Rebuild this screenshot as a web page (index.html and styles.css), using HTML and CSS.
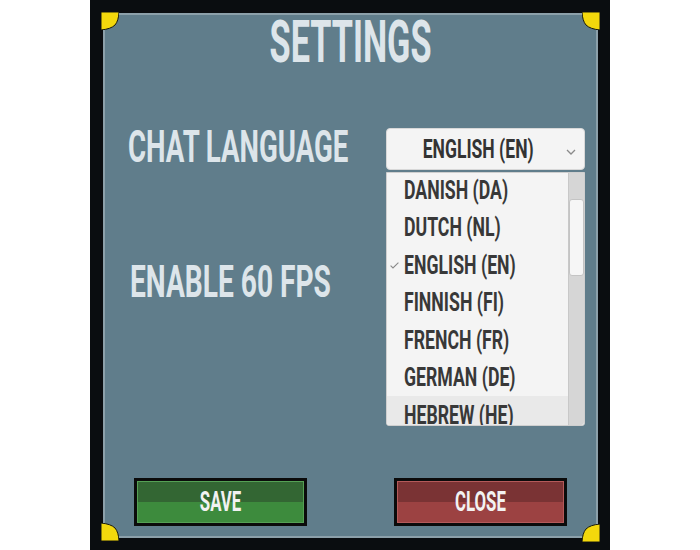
FILE: index.html
```html
<!DOCTYPE html>
<html>
<head>
<meta charset="utf-8">
<link rel="stylesheet" href="styles.css">
</head>
<body>
<div class="frame">
  <div class="panel">
    <h1 class="title"><span class="cond">SETTINGS</span></h1>
    <div class="row row-lang">
      <div class="label"><span class="cond c-label">CHAT LANGUAGE</span></div>
      <div class="select-wrap">
        <div class="select">
          <span class="select-text"><span class="cond c-sel">ENGLISH (EN)</span></span>
          <svg class="chev" width="10" height="6" viewBox="0 0 10 6"><path d="M1 1 L5 5 L9 1" fill="none" stroke="#8a8a8a" stroke-width="1.3"/></svg>
        </div>
        <div class="menu">
          <div class="items">
            <div class="item"><span class="cond c-item">DANISH (DA)</span></div>
            <div class="item"><span class="cond c-item">DUTCH (NL)</span></div>
            <div class="item"><svg class="check" width="9" height="7" viewBox="0 0 9 7"><path d="M0.6 3.6 L3 6 L8.4 0.6" fill="none" stroke="#8a8a8a" stroke-width="1.1"/></svg><span class="cond c-item">ENGLISH (EN)</span></div>
            <div class="item"><span class="cond c-item">FINNISH (FI)</span></div>
            <div class="item"><span class="cond c-item">FRENCH (FR)</span></div>
            <div class="item"><span class="cond c-item">GERMAN (DE)</span></div>
            <div class="item hover"><span class="cond c-item">HEBREW (HE)</span></div>
          </div>
          <div class="scrollbar"><div class="thumb"></div></div>
        </div>
      </div>
    </div>
    <div class="row row-fps">
      <div class="label"><span class="cond c-label2">ENABLE 60 FPS</span></div>
    </div>
    <div class="buttons">
      <button class="btn save"><span class="cond c-btn">SAVE</span></button>
      <button class="btn close"><span class="cond c-btn">CLOSE</span></button>
    </div>
  </div>
  <svg class="corner tl" width="18" height="18" viewBox="0 0 18 18"><path d="M0 0 H18 Q17.5 9 14 13 Q10 17 0 18 Z" fill="#f3d80c" stroke="#1a1a0a" stroke-width="1"/></svg>
  <svg class="corner tr" width="18" height="18" viewBox="0 0 18 18"><path d="M0 0 H18 Q17.5 9 14 13 Q10 17 0 18 Z" fill="#f3d80c" stroke="#1a1a0a" stroke-width="1"/></svg>
  <svg class="corner bl" width="18" height="18" viewBox="0 0 18 18"><path d="M0 0 H18 Q17.5 9 14 13 Q10 17 0 18 Z" fill="#f3d80c" stroke="#1a1a0a" stroke-width="1"/></svg>
  <svg class="corner br" width="18" height="18" viewBox="0 0 18 18"><path d="M0 0 H18 Q17.5 9 14 13 Q10 17 0 18 Z" fill="#f3d80c" stroke="#1a1a0a" stroke-width="1"/></svg>
</div>
</body>
</html>
```
FILE: styles.css
```css
html, body {
  margin: 0;
  padding: 0;
  background: #ffffff;
}
body {
  font-family: Roboto, "Liberation Sans", sans-serif;
  font-weight: 700;
}
.frame {
  position: relative;
  width: 520px;
  height: 550px;
  margin-left: 90px;
  background: #0a0d10;
  box-sizing: border-box;
  padding: 13px 12px 12px 13px;
}
.panel {
  height: 100%;
  box-sizing: border-box;
  background: #607d8b;
  border: 2px solid #8ca0aa;
  display: flex;
  flex-direction: column;
  padding: 5px 0 10px 0;
}
.cond {
  display: inline-block;
  transform: scaleX(0.58);
  transform-origin: left center;
  white-space: nowrap;
}
.title {
  margin: 0;
  font-size: 59px;
  line-height: 44px;
  color: #dde5ea;
  font-weight: 700;
  text-align: center;
}
.title .cond {
  transform-origin: center center;
}
.row {
  display: grid;
  grid-template-columns: minmax(0, 1fr) 199px;
  padding: 0 11px 0 23px;
  align-items: start;
}
.row-lang {
  margin-top: 64px;
}
.row-fps {
  margin-top: 95px;
}
.label {
  font-size: 45px;
  line-height: 33px;
  color: #dde5ea;
  margin-top: 2px;
  min-width: 0;
}
.c-label {
  transform: scaleX(0.613);
}
.c-label2 {
  transform: scaleX(0.625);
}
.row-fps .label {
  margin-top: 0;
  padding-left: 2px;
}
.select-wrap {
  position: relative;
  height: 42px;
}
.select {
  height: 42px;
  box-sizing: border-box;
  background: #f4f4f4;
  border: 1px solid #d8d8d8;
  border-radius: 4px;
  display: flex;
  align-items: center;
  padding-right: 14px;
  position: relative;
}
.select-text {
  flex: 1;
  text-align: center;
  font-size: 26px;
  line-height: 20px;
  color: #333333;
}
.c-sel {
  transform: scaleX(0.675);
  transform-origin: center center;
}
.chev {
  position: absolute;
  right: 8px;
  top: 20px;
}
.menu {
  position: absolute;
  left: 0;
  top: 44px;
  width: 199px;
  height: 254px;
  box-sizing: border-box;
  background: #f4f4f4;
  border: 1px solid #cfcfcf;
  border-radius: 0 0 3px 3px;
  display: flex;
  overflow: hidden;
}
.items {
  flex: 1;
  min-width: 0;
  margin-top: -2px;
}
.item {
  height: 37.5px;
  display: flex;
  align-items: center;
  padding-left: 17px;
  font-size: 26px;
  color: #383838;
  position: relative;
}
.item.hover {
  background: #e9e9e9;
}
.c-item {
  transform: scaleX(0.68);
}
.check {
  position: absolute;
  left: 3px;
  top: 16px;
}
.scrollbar {
  width: 16px;
  flex: none;
  background: #d6d6d6;
  border-left: 1px solid #c8c8c8;
  box-sizing: border-box;
  padding-top: 26px;
  border-radius: 0 0 3px 0;
}
.thumb {
  height: 77px;
  background: #f6f6f6;
  border: 1px solid #c4c4c4;
  border-radius: 3px;
  box-sizing: border-box;
}
.buttons {
  margin-top: auto;
  display: flex;
  justify-content: space-between;
  padding: 0 29px;
}
.btn {
  width: 173px;
  height: 48px;
  box-sizing: border-box;
  border: 3px solid #0b0b0b;
  padding: 0;
  margin: 0;
  font-family: Roboto, "Liberation Sans", sans-serif;
  font-weight: 700;
  font-size: 28px;
  line-height: 20px;
  color: #f2f2f2;
  text-align: center;
  cursor: pointer;
}
.c-btn {
  transform: scaleX(0.6);
  transform-origin: center center;
}
.save {
  background: linear-gradient(to bottom, #336633 0, #336633 50%, #3d8b3d 50%, #3d8b3d 100%);
  box-shadow: inset 0 0 0 1px #55a055;
}
.close {
  background: linear-gradient(to bottom, #7a3334 0, #7a3334 50%, #9c4242 50%, #9c4242 100%);
  box-shadow: inset 0 0 0 1px #b45a5a;
}
.corner {
  position: absolute;
}
.corner.tl { left: 11px; top: 12px; }
.corner.tr { right: 10px; top: 12px; transform: scaleX(-1); }
.corner.bl { left: 11px; bottom: 9px; transform: scaleY(-1); }
.corner.br { right: 10px; bottom: 8px; transform: scale(-1, -1); }
```
